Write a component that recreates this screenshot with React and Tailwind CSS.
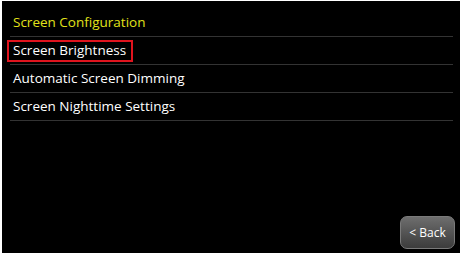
export default function App() {
  const font = { fontFamily: '"Open Sans", "Noto Sans", sans-serif' };
  return (
    <div className="w-[464px] h-[255px] bg-white pl-[2px] pt-[1px]" style={font}>
      <div className="w-[458px] h-[252px] bg-black flex flex-col">
        <div className="ml-[8px] mr-[7px]">
          <div className="h-[36px] border-b border-[#333333] pt-[15px] pl-[3px] text-[13.5px] text-[#e2e21a] leading-none">
            Screen Configuration
          </div>
          <div className="relative h-[28px] border-b border-[#333333] flex items-center pl-[3px] text-[13.5px] text-white leading-none">
            <span className="absolute left-[-3px] top-[3px] w-[126px] h-[22px] border-2 border-[#e0141e]"></span>
            Screen Brightness
          </div>
          <div className="h-[28px] border-b border-[#333333] flex items-center pl-[3px] text-[13.5px] text-white leading-none">
            Automatic Screen Dimming
          </div>
          <div className="h-[28px] border-b border-[#333333] flex items-center pl-[3px] text-[13.5px] text-white leading-none">
            Screen Nighttime Settings
          </div>
        </div>
        <div className="flex-1"></div>
        <div className="flex justify-end mr-[5px] mb-[4px]">
          <div className="w-[55px] h-[33px] rounded-[7px] border border-[#7a7a7a] bg-gradient-to-b from-[#6e6e6e] to-[#3c3c3c] flex items-center justify-center text-[12px] text-white">
            &lt; Back
          </div>
        </div>
      </div>
    </div>
  );
}
